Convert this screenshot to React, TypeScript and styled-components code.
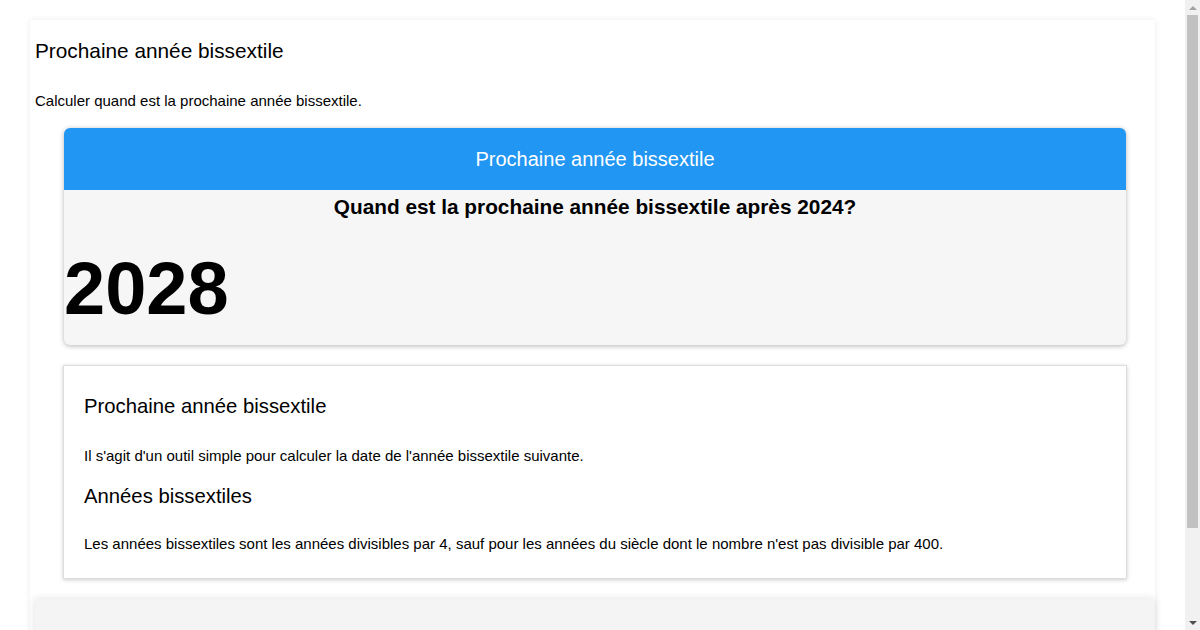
import styled, { createGlobalStyle } from "styled-components";

const GlobalStyle = createGlobalStyle`
	html, body {
		margin: 0;
		padding: 0;
		background: #ffffff;
		font-family: "Liberation Sans", Arial, sans-serif;
		color: #000000;
		overflow: hidden;
	}
`;

const Viewport = styled.div`
	display: flex;
	width: 1200px;
	height: 630px;
	overflow: hidden;
`;

const Page = styled.div`
	flex: 1;
	min-width: 0;
	padding: 20px 30px 0 30px;
`;

const Scrollbar = styled.div`
	width: 15px;
	flex: 0 0 15px;
	display: flex;
	flex-direction: column;
	background: #f1f1f1;
`;

const ScrollButton = styled.div`
	height: 15px;
	display: flex;
	align-items: center;
	justify-content: center;
`;

const Arrow = styled.div<{ $down?: boolean; $dim?: boolean }>`
	width: 0;
	height: 0;
	border-left: 4px solid transparent;
	border-right: 4px solid transparent;
	${(p) =>
		p.$down
			? `border-top: 4px solid ${p.$dim ? "#a3a3a3" : "#505050"};`
			: `border-bottom: 4px solid ${p.$dim ? "#a3a3a3" : "#505050"};`}
`;

const Track = styled.div`
	flex: 1;
	padding: 0 2px;
`;

const Thumb = styled.div`
	height: 513px;
	background: #c1c1c1;
`;

const MainCard = styled.main`
	background: #ffffff;
	box-shadow: 0 0 6px rgba(0, 0, 0, 0.08);
	padding: 16px 0 0 5px;
`;

const Content = styled.div`
	padding-right: 5px;
`;

const PageTitle = styled.h1`
	margin: 0;
	font-size: 20.8px;
	font-weight: 400;
	line-height: 30px;
`;

const Lead = styled.p`
	margin: 25px 0 0 0;
	font-size: 15px;
	line-height: 20px;
`;

const ToolCard = styled.section`
	width: 1062px;
	margin: 17px 0 0 29px;
	background: #f6f6f6;
	border-radius: 6px;
	box-shadow: 0 1px 5px rgba(0, 0, 0, 0.3);
	overflow: hidden;
`;

const ToolHeader = styled.div`
	background: #2196f3;
	color: #ffffff;
	height: 62px;
	display: flex;
	align-items: center;
	justify-content: center;
	font-size: 20px;
`;

const Question = styled.h2`
	margin: 0;
	padding-top: 4px;
	text-align: center;
	font-size: 20.8px;
	font-weight: 700;
	line-height: 26px;
`;

const Answer = styled.div`
	font-size: 74px;
	font-weight: 700;
	line-height: 90px;
	padding: 24px 0 11px 0;
`;

const InfoCard = styled.section`
	box-sizing: border-box;
	width: 1064px;
	margin: 20px 0 0 28px;
	background: #ffffff;
	border: 1px solid #dddddd;
	box-shadow: 0 1px 4px rgba(0, 0, 0, 0.2);
	padding: 26px 20px 24px 20px;
`;

const InfoTitle = styled.h2`
	margin: 0;
	font-size: 20.3px;
	font-weight: 400;
	line-height: 28px;
`;

const InfoText = styled.p<{ $gap: number }>`
	margin: ${(p) => p.$gap}px 0 0 0;
	font-size: 15px;
	line-height: 20px;
`;

const SubTitle = styled(InfoTitle)`
	margin-top: 16px;
`;

const Footer = styled.footer`
	margin-top: 20px;
	height: 140px;
	background: #f4f4f4;
	box-shadow: 0 0 8px rgba(0, 0, 0, 0.12);
`;

export default function App() {
	return (
		<>
			<GlobalStyle />
			<Viewport>
				<Page>
					<MainCard>
						<Content>
							<PageTitle>Prochaine année bissextile</PageTitle>
							<Lead>Calculer quand est la prochaine année bissextile.</Lead>
							<ToolCard>
								<ToolHeader>Prochaine année bissextile</ToolHeader>
								<Question>Quand est la prochaine année bissextile après 2024?</Question>
								<Answer>2028</Answer>
							</ToolCard>
							<InfoCard>
								<InfoTitle>Prochaine année bissextile</InfoTitle>
								<InfoText $gap={26}>Il s'agit d'un outil simple pour calculer la date de l'année bissextile suivante.</InfoText>
								<SubTitle>Années bissextiles</SubTitle>
								<InfoText $gap={24}>
									Les années bissextiles sont les années divisibles par 4, sauf pour les années du siècle dont le nombre n'est pas divisible par 400.
								</InfoText>
							</InfoCard>
						</Content>
						<Footer />
					</MainCard>
				</Page>
				<Scrollbar>
					<ScrollButton>
						<Arrow $dim />
					</ScrollButton>
					<Track>
						<Thumb />
					</Track>
					<ScrollButton>
						<Arrow $down />
					</ScrollButton>
				</Scrollbar>
			</Viewport>
		</>
	);
}
